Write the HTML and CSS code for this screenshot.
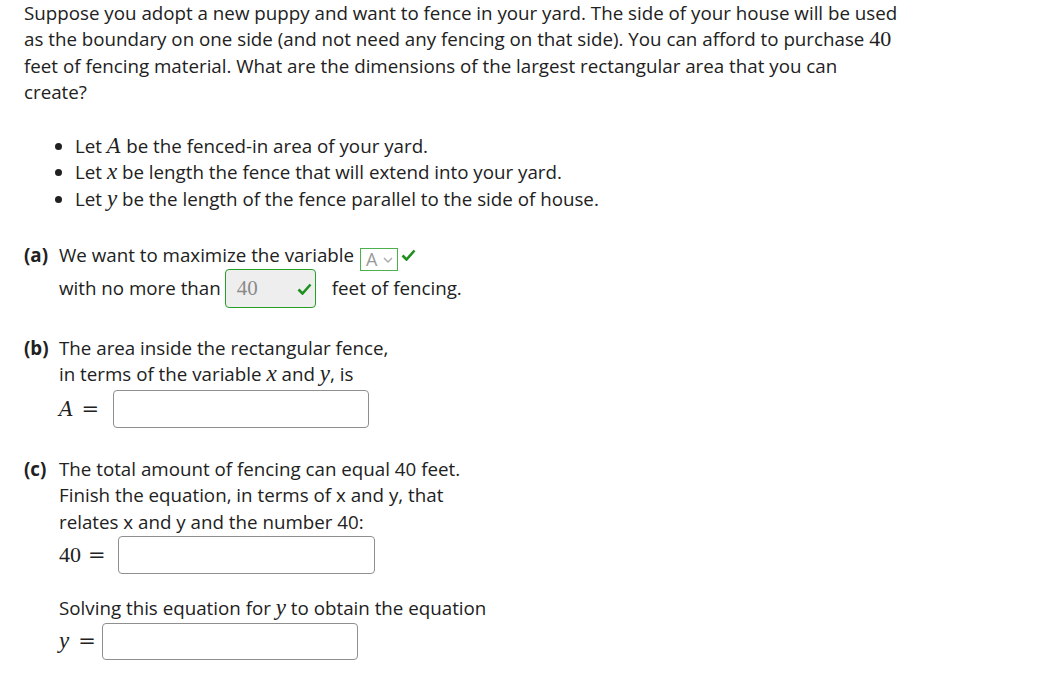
FILE: index.html
```html
<!DOCTYPE html>
<html>
<head>
<meta charset="utf-8">
<link rel="stylesheet" href="styles.css">
</head>
<body>
<div class="page">
  <p class="intro">Suppose you adopt a new puppy and want to fence in your yard. The side of your house will be used as the boundary on one side (and not need any fencing on that side). You can afford to purchase <span class="mn">40</span> feet of fencing material. What are the dimensions of the largest rectangular area that you can create?</p>

  <ul class="defs">
    <li>Let <span class="mi">A</span> be the fenced-in area of your yard.</li>
    <li>Let <span class="mi lc">x</span> be length the fence that will extend into your yard.</li>
    <li>Let <span class="mi lc">y</span> be the length of the fence parallel to the side of house.</li>
  </ul>

  <div class="part part-a">
    <span class="label">(a)</span>
    <div class="body">
      <div class="line">We want to maximize the variable <span class="select">A<svg class="chev" width="10" height="6" viewBox="0 0 10 6"><path d="M1 1 L5 5 L9 1" fill="none" stroke="#aaa" stroke-width="1.4"/></svg></span><svg class="check small" width="15" height="12" viewBox="0 0 15 12"><path d="M1.5 6.5 L5.5 10.5 L13.5 1.5" fill="none" stroke="#1f8f1f" stroke-width="2.6"/></svg></div>
      <div class="row row-a2">with no more than <span class="answered"><span class="val">40</span><svg class="check" width="15" height="12" viewBox="0 0 15 12"><path d="M1.5 6.5 L5.5 10.5 L13.5 1.5" fill="none" stroke="#1f8f1f" stroke-width="2.6"/></svg></span> <span class="after">feet of fencing.</span></div>
    </div>
  </div>

  <div class="part part-b">
    <span class="label">(b)</span>
    <div class="body">
      <div class="line">The area inside the rectangular fence,</div>
      <div class="line">in terms of the variable <span class="mi lc">x</span> and <span class="mi lc">y</span>, is</div>
      <div class="row row-eq row-b"><span class="eq"><span class="mi">A</span><span class="mo">=</span></span><span class="box"></span></div>
    </div>
  </div>

  <div class="part part-c">
    <span class="label">(c)</span>
    <div class="body">
      <div class="line">The total amount of fencing can equal 40 feet.</div>
      <div class="line">Finish the equation, in terms of x and y, that</div>
      <div class="line">relates x and y and the number 40:</div>
      <div class="row row-eq row-c"><span class="eq"><span class="mn">40</span><span class="mo">=</span></span><span class="box"></span></div>
      <div class="line solving">Solving this equation for <span class="mi lc">y</span> to obtain the equation</div>
      <div class="row row-eq row-y"><span class="eq"><span class="mi lc">y</span><span class="mo">=</span></span><span class="box"></span></div>
    </div>
  </div>
</div>
</body>
</html>
```

FILE: styles.css
```css
html, body {
  margin: 0;
  padding: 0;
  background: #fff;
}
.page {
  padding: 0 24px;
  font-family: "Open Sans", "Noto Sans", sans-serif;
  font-size: 18.75px;
  line-height: 26.4px;
  color: #212121;
  width: 876px;
}
.intro {
  margin: 0;
}
.mi {
  font-family: "DejaVu Serif", "Liberation Serif", serif;
  font-style: italic;
  font-size: 20px;
  line-height: 20px;
}
.mi.lc {
  font-family: "Liberation Serif", "DejaVu Serif", serif;
  font-size: 23px;
}
.mn {
  font-family: "Liberation Serif", "DejaVu Serif", serif;
  font-size: 22px;
  line-height: 20px;
}
.mo {
  font-family: "DejaVu Serif", "Liberation Serif", serif;
  font-size: 21px;
  line-height: 20px;
}
.defs {
  margin: 27px 0 0 0;
  padding-left: 51px;
}
.defs li {
  line-height: 26.5px;
}
.part {
  display: flex;
}
.label {
  font-weight: 700;
  width: 35px;
  flex: none;
  line-height: 26.5px;
}
.part-c .label {
  width: 33px;
}
.body {
  display: flex;
  flex-direction: column;
}
.line {
  line-height: 26.5px;
  height: 26.5px;
  white-space: nowrap;
}
.part-a {
  margin-top: 30px;
}
.select {
  display: inline-flex;
  align-items: center;
  gap: 6px;
  box-sizing: border-box;
  height: 23px;
  padding: 0 4px 0 5px;
  border: 1px solid #4cb04c;
  color: #9a9a9a;
  font-size: 18px;
  line-height: 21px;
  vertical-align: -4px;
  margin-left: 1px;
}
.chev {
  display: block;
}
.check.small {
  vertical-align: 1px;
  margin-left: 3px;
}
.row {
  display: flex;
  align-items: center;
  white-space: nowrap;
}
.row-a2 {
  height: 40px;
}
.answered {
  display: inline-flex;
  align-items: center;
  justify-content: space-between;
  box-sizing: border-box;
  width: 91px;
  height: 39px;
  margin-left: 4px;
  padding: 0 3px 0 11px;
  background: #eeeeee;
  border: 1px solid #27a027;
  border-radius: 4px;
}
.answered .val {
  font-family: "Liberation Serif", "DejaVu Serif", serif;
  font-size: 21px;
  color: #8a8a8a;
}
.after {
  margin-left: 16px;
}
.part-b {
  margin-top: 26px;
}
.row-eq .eq {
  display: inline-flex;
  align-items: baseline;
  gap: 8px;
  margin-right: 14px;
}
.row-c .eq {
  gap: 7px;
  margin-right: 12px;
}
.row-y .eq {
  gap: 9px;
  margin-right: 6px;
}
.box {
  display: block;
  box-sizing: border-box;
  width: 256px;
  height: 38px;
  border: 1px solid #8f8f8f;
  border-radius: 4px;
  background: #fff;
}
.row-b {
  margin-top: 2px;
}
.part-c {
  margin-top: 28px;
}
.part-c .body {
  margin-left: 2px;
}
.row-c {
  margin-top: 1px;
}
.row-c .box {
  width: 257px;
}
.solving {
  margin-top: 21px;
}
.row-y {
  margin-top: 1px;
}
.row-y .box {
  height: 37px;
}
```
